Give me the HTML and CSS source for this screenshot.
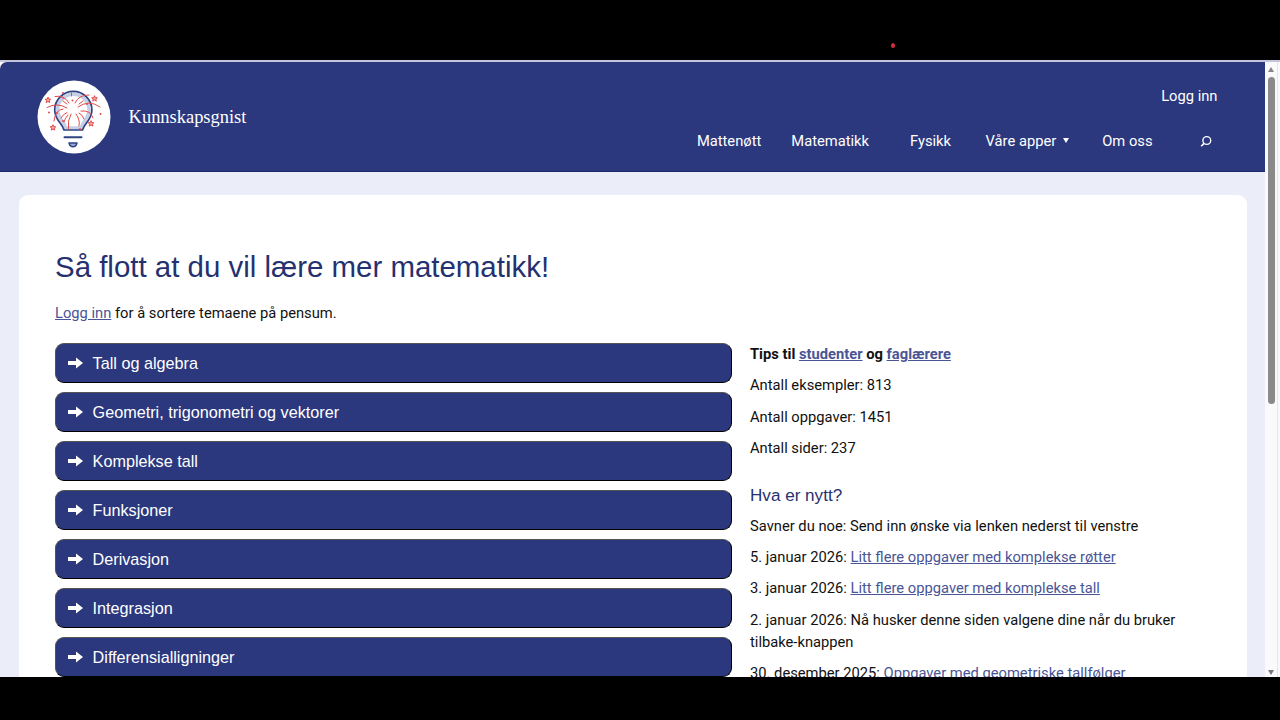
FILE: index.html
```html
<!DOCTYPE html>
<html lang="no">
<head>
    <meta charset="utf-8">
    <title>Kunnskapsgnist</title>
    <link rel="stylesheet" href="styles.css">
</head>
<body>
    <div class="top-bar"><span class="dot"></span></div>
    <div class="window">
        <div class="page">
            <header class="header">
                <div class="brand">
                    <svg class="logo" viewBox="0 0 74 74">
                        <circle cx="37" cy="37" r="36.500" fill="#fff"/>
                        <path d="M28.500 48C27 41 20.500 38 20.500 30a15.800 15.800 0 0 1 31.600 0C52.100 38 46 41 44 48z" fill="#fff" stroke="#c6cfe6" stroke-width="3.600"/>
                        <path d="M27 50C25 43 17.700 40 17.700 30a18.600 18.600 0 0 1 37.200 0C54.900 40 47.500 43 45.500 50z" fill="none" stroke="#2d4384" stroke-width="1.700" stroke-linejoin="round"/>
                        <path d="M27.500 57.300h17" stroke="#2d4384" stroke-width="2" stroke-linecap="round"/>
                        <path d="M32 63h8q-1 3.800-4 3.800T32 63z" fill="#9cadd5" stroke="#2d4384" stroke-width="1.500" stroke-linejoin="round"/>
                        <g fill="none" stroke="#e34b48" stroke-width="1" stroke-linecap="round">
                            <path d="M10 27.500Q20 22 30 28"/>
                            <path d="M18 16.500Q27 14.500 32 23"/>
                            <path d="M17 41Q18 30 26 29"/>
                            <path d="M41 27Q52 19 63 27"/>
                            <path d="M38 23Q42 14.500 52 15"/>
                            <path d="M44 31Q54 30 56 38"/>
                            <path d="M34 34Q30 41 31.500 49"/>
                            <path d="M39 34Q43.500 40 42 46"/>
                            <path d="M30 32.500Q26 34 24 38"/>
                            <path d="M31 35Q28 38 27 42"/>
                            <path d="M42 33Q46 35 47 39"/>
                            <path d="M34.500 16v-3M30 24l-4-3M42 24l4-3M26.500 19l-2-2"/>
                        </g>
                        <g fill="#f6aaa8" stroke="#e34b48" stroke-width="1" stroke-linejoin="round">
                            <path id="star" d="M11 17.200l.8 1.900 2 .2-1.500 1.300.5 2-1.800-1.100-1.800 1.100.5-2-1.500-1.300 2-.2z"/>
                            <use href="#star" x="46.500" y="-1.500"/>
                            <use href="#star" x="5" y="27.500"/>
                            <use href="#star" x="43" y="23.500"/>
                        </g>
                        <g fill="#e34b48">
                            <circle cx="12" cy="32.500" r="1"/>
                            <circle cx="63.500" cy="34" r="1"/>
                            <circle cx="26" cy="13" r="1"/>
                            <circle cx="35.500" cy="20.500" r="1"/>
                            <circle cx="50" cy="24" r="1"/>
                            <circle cx="20" cy="33" r="1"/>
                            <circle cx="26" cy="41" r="1"/>
                            <circle cx="43" cy="49" r="1"/>
                        </g>
                    </svg>
                    <span class="brand-name">Kunnskapsgnist</span>
                </div>
                <div class="menus">
                    <a class="login">Logg inn</a>
                    <nav class="nav">
                        <a class="nav-quiz">Mattenøtt</a>
                        <a class="nav-math">Matematikk</a>
                        <a class="nav-physics">Fysikk</a>
                        <a class="nav-apps">Våre apper <span class="caret"></span></a>
                        <a class="nav-about">Om oss</a>
                        <svg class="search" viewBox="0 0 12 12">
                            <circle cx="6.800" cy="5.500" r="3.900" fill="none" stroke="#fff" stroke-width="1.400"/>
                            <path d="M4 8.400L1.200 11.200" stroke="#fff" stroke-width="1.600"/>
                        </svg>
                    </nav>
                </div>
            </header>
            <main class="card">
                <h1>Så flott at du vil lære mer matematikk!</h1>
                <p class="intro"><a class="link">Logg inn</a> for å sortere temaene på pensum.</p>
                <div class="columns">
                    <div class="topics">
                        <button class="topic"><svg class="arrow" viewBox="0 0 15 12"><path d="M0 4h8V.500L15 6l-7 5.500V8H0z"/></svg>Tall og algebra</button>
                        <button class="topic"><svg class="arrow" viewBox="0 0 15 12"><path d="M0 4h8V.500L15 6l-7 5.500V8H0z"/></svg>Geometri, trigonometri og vektorer</button>
                        <button class="topic"><svg class="arrow" viewBox="0 0 15 12"><path d="M0 4h8V.500L15 6l-7 5.500V8H0z"/></svg>Komplekse tall</button>
                        <button class="topic"><svg class="arrow" viewBox="0 0 15 12"><path d="M0 4h8V.500L15 6l-7 5.500V8H0z"/></svg>Funksjoner</button>
                        <button class="topic"><svg class="arrow" viewBox="0 0 15 12"><path d="M0 4h8V.500L15 6l-7 5.500V8H0z"/></svg>Derivasjon</button>
                        <button class="topic"><svg class="arrow" viewBox="0 0 15 12"><path d="M0 4h8V.500L15 6l-7 5.500V8H0z"/></svg>Integrasjon</button>
                        <button class="topic"><svg class="arrow" viewBox="0 0 15 12"><path d="M0 4h8V.500L15 6l-7 5.500V8H0z"/></svg>Differensialligninger</button>
                    </div>
                    <aside class="side">
                        <p class="tips">Tips til <a class="link">studenter</a> og <a class="link">faglærere</a></p>
                        <p>Antall eksempler: 813</p>
                        <p>Antall oppgaver: 1451</p>
                        <p>Antall sider: 237</p>
                        <h2>Hva er nytt?</h2>
                        <p>Savner du noe: Send inn ønske via lenken nederst til venstre</p>
                        <p>5. januar 2026: <a class="link">Litt flere oppgaver med komplekse røtter</a></p>
                        <p>3. januar 2026: <a class="link">Litt flere oppgaver med komplekse tall</a></p>
                        <p>2. januar 2026: Nå husker denne siden valgene dine når du bruker tilbake-knappen</p>
                        <p>30. desember 2025: <a class="link">Oppgaver med geometriske tallfølger</a></p>
                    </aside>
                </div>
            </main>
        </div>
        <div class="scrollbar">
            <span class="scroll-up"></span>
            <span class="thumb"></span>
            <span class="scroll-down"></span>
        </div>
    </div>
</body>
</html>
```

FILE: styles.css
```css
* {
    box-sizing: border-box;
}
body {
    margin: 0;
    height: 720px;
    overflow: hidden;
    background: #000;
    color: #111;
    font-family: Roboto, sans-serif;
    font-size: 14.73px;
    line-height: 22px;
}
.top-bar {
    height: 60px;
    padding: 43px 0 0 891px;
}
.dot {
    display: block;
    width: 4px;
    height: 5px;
    border-radius: 50%;
    background: #d22f40;
}
.window {
    display: flex;
    height: 617px;
    overflow: hidden;
    border-top: 2px solid #c3c6dc;
    background: #fafafc;
}
.page {
    width: 1265px;
    height: 615px;
    overflow: hidden;
    border-top-left-radius: 7px;
    background: #ebedf9;
}
.header {
    display: flex;
    justify-content: space-between;
    height: 110px;
    padding: 0 47.5px 0 36.6px;
    border-bottom: 1px solid #20286a;
    background: #2c387e;
    color: #fff;
}
.brand {
    display: flex;
    align-items: center;
    gap: 18px;
}
.logo {
    width: 74px;
    height: 74px;
}
.brand-name {
    font-family: "Liberation Serif", serif;
    font-size: 18.45px;
}
.menus {
    display: flex;
    flex-direction: column;
    align-items: flex-end;
    padding-top: 23px;
}
.nav {
    display: flex;
    align-items: center;
    margin-top: 23px;
    padding-right: 6px;
}
.nav-quiz {
    margin-right: 30px;
}
.nav-math {
    margin-right: 41px;
}
.nav-physics {
    margin-right: 34.5px;
}
.nav-apps {
    display: flex;
    align-items: center;
    gap: 7px;
    margin: -1px 33px 0 0;
}
.caret {
    border: 3px solid transparent;
    border-top: 5px solid #fff;
    border-bottom: 0;
}
.nav-about {
    margin-right: 47px;
}
.search {
    width: 12px;
    height: 12px;
}
.card {
    height: 600px;
    margin: 23px 18px 0 19px;
    padding: 52px 36px 0;
    border-radius: 9px;
    background: #fff;
}
h1, h2 {
    margin: 0;
    color: #25316f;
    font-family: "Liberation Sans", Arial, sans-serif;
    font-weight: normal;
}
h1 {
    font-size: 29.45px;
    line-height: 40px;
}
p {
    margin: 0 0 9.25px;
}
.intro {
    margin: 15px 0 19px;
}
.link {
    color: #4a5596;
    text-decoration: underline;
}
.columns {
    display: flex;
    gap: 18px;
}
.topics {
    display: flex;
    flex-direction: column;
    gap: 9px;
    width: 677px;
}
.topic {
    display: flex;
    align-items: center;
    gap: 10px;
    height: 40px;
    padding: 0 11.6px;
    border: 1.4px outset #000;
    border-radius: 9px;
    background: #2c387e;
    color: #fff;
    font-family: "Liberation Sans", Arial, sans-serif;
    font-size: 16.2px;
    text-align: left;
}
.arrow {
    width: 15px;
    height: 12px;
    fill: #fff;
}
.side {
    width: 446px;
}
.tips {
    font-weight: bold;
}
h2 {
    margin: 26px 0 8px;
    font-size: 17.1px;
    line-height: 22px;
}
.scrollbar {
    display: flex;
    flex-direction: column;
    align-items: center;
    width: 13px;
    height: 615px;
    padding: 5px 0 2px;
    border-right: 1px solid #e4e4ea;
}
.scroll-up {
    border: 3.5px solid transparent;
    border-top: 0;
    border-bottom: 5px solid #858585;
}
.thumb {
    width: 7px;
    height: 327px;
    margin-top: 5px;
    border-radius: 4px;
    background: #8a8a8a;
}
.scroll-down {
    margin-top: auto;
    border: 3.5px solid transparent;
    border-top: 5px solid #777;
    border-bottom: 0;
}
```
